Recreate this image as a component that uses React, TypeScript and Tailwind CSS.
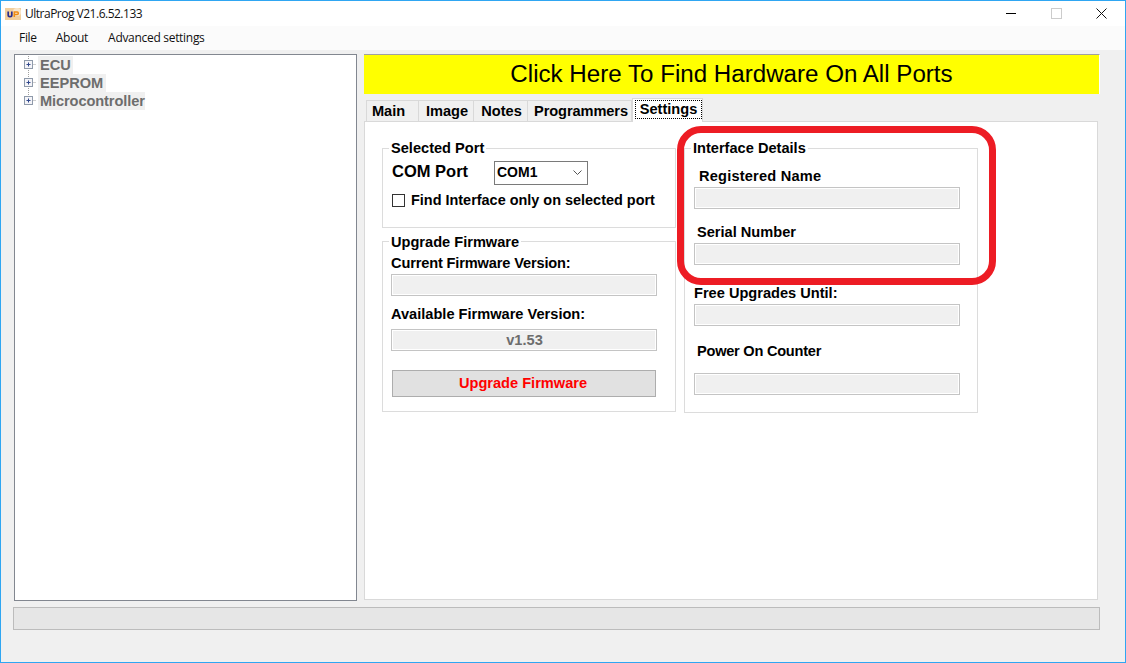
import React from "react";

const sans = "font-['Liberation_Sans',Arial,sans-serif]";

function Expander({ last }: { last?: boolean }) {
  return (
    <svg width="21" height="18" viewBox="0 0 21 18" className="shrink-0">
      <path d={last ? "M14 0V8.5" : "M14 0V18"} transform="translate(-0.5 0)" stroke="#a0a0a0" strokeDasharray="1 1" fill="none" />
      <path d="M18 8.5H24" transform="translate(-0.5 0)" stroke="#a0a0a0" strokeDasharray="1 1" fill="none" />
      <rect x="9.5" y="4.5" width="8" height="8" fill="#f4f4f8" stroke="#8f9aaa" />
      <path d="M11.5 8.5H15.5M13.5 6.5V10.5" stroke="#30488c" fill="none" />
    </svg>
  );
}

function TreeRow({ label, w, last }: { label: string; w: string; last?: boolean }) {
  return (
    <div className="flex h-[18px] items-center">
      <Expander last={last} />
      <span className={`${w} ml-[2px] bg-[#f0f0f0] pl-[2px] text-[14.6px] font-bold leading-[18px] text-[#6d6d6d] whitespace-nowrap`}>{label}</span>
    </div>
  );
}

function Tab({ label, w }: { label: string; w: string }) {
  return (
    <div className={`${w} flex h-[21px] items-center justify-center border-t border-r border-[#d9d9d9] bg-[#f0f0f0] pt-[1px] text-[14.6px] font-bold text-black`}>
      {label}
    </div>
  );
}

function Group({ title, className, legend, children }: { title: string; className: string; legend: string; children: React.ReactNode }) {
  return (
    <fieldset className={`${className} border border-[#dcdcdc]`}>
      <legend className={`${legend} ml-[6px] px-[2px] text-[14.6px] font-bold leading-[16px] text-black`}>{title}</legend>
      {children}
    </fieldset>
  );
}

function Field({ children }: { children?: React.ReactNode }) {
  return (
    <div className="flex h-[22px] w-[266px] items-center justify-center border border-[#c4c4c4] bg-[#f0f0f0] pl-[1px] pt-[1px] text-[14.6px] font-bold text-[#6d6d6d] shadow-[inset_0_0_0_1px_#ffffff]">
      {children}
    </div>
  );
}

function Label({ className, children }: { className: string; children: React.ReactNode }) {
  return <div className={`${className} text-[14.6px] font-bold leading-[16px] text-black`}>{children}</div>;
}

export default function App() {
  return (
    <div className={`${sans} relative flex h-[663px] w-[1126px] flex-col overflow-hidden border border-[#2fa6f2] bg-[#f0f0f0]`}>
      {/* title bar */}
      <div className="flex h-[25px] shrink-0 items-center bg-white pl-[4px]">
        <svg width="16" height="12" viewBox="0 0 16 12" className="mt-[1px]">
          <rect width="16" height="12" fill="#f2cf9c" />
          <circle cx="12" cy="4" r="4" fill="#f8e6cc" />
          <path d="M3.2 3.5V7.2Q3.2 8.6 5 8.6Q6.8 8.6 6.8 7.2V3.5" stroke="#2b2f8f" strokeWidth="1.7" fill="none" />
          <path d="M9.3 9V4H12.3Q13.3 4 13.3 5.2Q13.3 6.4 12.3 6.4H9.3" stroke="#ee8a12" strokeWidth="1.5" fill="none" />
        </svg>
        <span className="ml-[4px] font-['Open_Sans',sans-serif] text-[12px] tracking-[-0.5px] text-[#111]">UltraProg V21.6.52.133</span>
        <div className="ml-auto flex items-center pr-[18px]">
          <div className="h-[1px] w-[10px] bg-black" />
          <div className="ml-[35px] h-[11px] w-[11px] border border-[#cccccc]" />
          <svg width="11" height="11" viewBox="0 0 11 11" className="ml-[34px]">
            <path d="M0.5 0.5L10.5 10.5M10.5 0.5L0.5 10.5" stroke="#111" fill="none" />
          </svg>
        </div>
      </div>
      {/* menu */}
      <div className="flex h-[24px] shrink-0 items-center bg-[#fbfbfb] pl-[18px] font-['Open_Sans',sans-serif] text-[12px] tracking-[-0.3px] text-[#111]">
        <span>File</span>
        <span className="ml-[19px]">About</span>
        <span className="ml-[20px]">Advanced settings</span>
      </div>
      {/* body */}
      <div className="flex flex-1 gap-[7px] pl-[13px] pt-[4px]">
        <div className="h-[547px] w-[343px] shrink-0 border border-[#828790] bg-white pt-[1px]">
          <TreeRow label="ECU" w="w-[35px]" />
          <TreeRow label="EEPROM" w="w-[68px]" />
          <TreeRow label="Microcontroller" w="w-[107px] tracking-[-0.1px]" last />
        </div>
        <div className="flex w-[736px] flex-col">
          <div className="flex h-[40px] shrink-0 items-center justify-center border-t border-r border-t-[#a0a0a0] border-r-white bg-[#ffff00] pb-[1px] text-[24.15px] text-black">
            Click Here To Find Hardware On All Ports
          </div>
          <div className="mt-[4px] flex h-[23px] shrink-0 items-end pl-[2px]">
            <Tab label="Main" w="w-[53px] border-l pr-[8px]" />
            <Tab label="Image" w="w-[55px] pl-[2px]" />
            <Tab label="Notes" w="w-[54px] pl-[2px]" />
            <Tab label="Programmers" w="w-[104px] pl-[3px] tracking-[-0.1px]" />
            <div className="relative z-10 -mb-[1px] flex h-[24px] w-[71px] items-start justify-center border-x border-t border-[#d9d9d9] bg-white pl-[2px] pt-[1px]">
              <span className="flex h-[19px] w-[67px] items-center justify-center border border-dotted border-black text-[14.6px] font-bold text-black">Settings</span>
            </div>
          </div>
          <div className="flex h-[479px] w-[734px] shrink-0 gap-[8px] border border-[#d9d9d9] bg-white pl-[17px] pt-[18px]">
            <div className="flex w-[294px] flex-col gap-[5px]">
              <Group title="Selected Port" legend="pb-[1px]" className="h-[88px] w-[294px]">
                <div className="flex h-[28px] items-center pl-[9px]">
                  <span className="w-[102px] text-[16.5px] font-bold leading-[20px] text-black">COM Port</span>
                  <div className="mt-[4px] flex h-[24px] w-[94px] items-center justify-between self-start border border-[#7a7a7a] bg-white pb-[1px] pl-[2px] pr-[5px] text-[14px] font-bold text-black">
                    COM1
                    <svg width="9" height="5" viewBox="0 0 9 5"><path d="M0.5 0.5L4.5 4.5L8.5 0.5" stroke="#555" fill="none" /></svg>
                  </div>
                </div>
                <div className="mt-[7px] flex items-center pl-[9px]">
                  <div className="h-[13px] w-[13px] border border-[#333] bg-white" />
                  <span className="ml-[6px] text-[14.45px] font-bold leading-[16px] text-black">Find Interface only on selected port</span>
                </div>
              </Group>
              <Group title="Upgrade Firmware" legend="pt-[1px]" className="h-[179px] w-[294px]">
                <div className="flex flex-col pl-[8px]">
                  <Label className="mt-[5px] tracking-[-0.15px]">Current Firmware Version:</Label>
                  <div className="mt-[3px]"><Field /></div>
                  <Label className="mt-[10px]">Available Firmware Version:</Label>
                  <div className="mt-[7px]"><Field>v1.53</Field></div>
                  <div className="ml-[1px] mt-[19px] flex h-[27px] w-[264px] items-center justify-center border border-[#adadad] bg-[#e1e1e1] pr-[2px] text-[14.6px] font-bold text-[#ff0000]">Upgrade Firmware</div>
                </div>
              </Group>
            </div>
            <Group title="Interface Details" legend="pb-[1px]" className="h-[273px] w-[294px]">
              <div className="flex flex-col pl-[9px]">
                <Label className="ml-[5px] mt-[11px] tracking-[0.2px]">Registered Name</Label>
                <div className="mt-[3px]"><Field /></div>
                <Label className="ml-[3px] mt-[15px]">Serial Number</Label>
                <div className="mt-[3px]"><Field /></div>
                <Label className="mt-[20px]">Free Upgrades Until:</Label>
                <div className="mt-[3px]"><Field /></div>
                <Label className="ml-[3px] mt-[17px] tracking-[-0.25px]">Power On Counter</Label>
                <div className="mt-[14px]"><Field /></div>
              </div>
            </Group>
          </div>
        </div>
      </div>
      {/* status bar */}
      <div className="mb-[32px] ml-[12px] h-[23px] w-[1087px] shrink-0 border border-[#bcbcbc] bg-[#e6e6e6]" />
      {/* red annotation */}
      <div className="absolute left-[676px] top-[125px] h-[159px] w-[319px] rounded-[24px] border-[7px] border-[#ed1c24]" />
    </div>
  );
}
